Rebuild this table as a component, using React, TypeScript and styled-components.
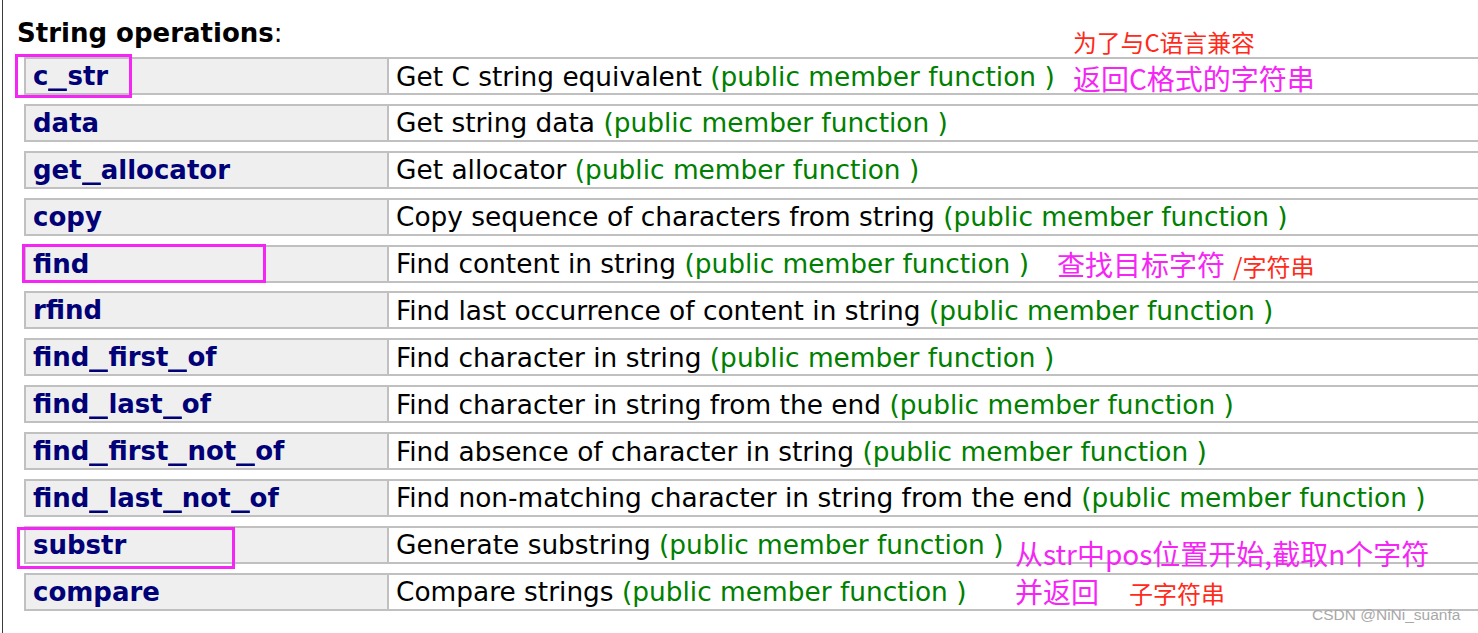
import React from "react";
import styled, { createGlobalStyle } from "styled-components";

const GlobalStyle = createGlobalStyle`
  html, body { margin: 0; padding: 0; background: #ffffff; overflow: hidden; }
  #root { width: 1478px; height: 633px; position: relative; overflow: hidden; }
`;

const Frame = styled.div`
  margin-left: 2px;
  height: 633px;
  border-left: 1px solid #3a3a3a;
  padding-left: 14px;
  box-sizing: border-box;
  font-family: "DejaVu Sans", Verdana, sans-serif;
  overflow: hidden;
`;

const Title = styled.h3`
  margin: 0;
  padding-top: 17px;
  height: 57px;
  box-sizing: border-box;
  font-size: 26px;
  line-height: 32px;
  font-weight: normal;
  color: #000;
  b { font-weight: bold; }
`;

const Table = styled.div`
  margin-left: 7px;
  display: flex;
  flex-direction: column;
  gap: 8.88px;
`;

const Row = styled.div`
  display: flex;
  width: 1600px;
  height: 38px;
  box-sizing: border-box;
  border-top: 2px solid #c0c0c0;
  border-bottom: 2px solid #c0c0c0;
  font-size: 26.4px;
`;

const NameCell = styled.div`
  width: 365px;
  flex: none;
  box-sizing: border-box;
  background: #efefef;
  border-left: 2px solid #c0c0c0;
  border-right: 2px solid #c0c0c0;
  padding-left: 7px;
  display: flex;
  align-items: center;
  font-size: 26px;
  font-weight: bold;
  color: #000077;
  white-space: pre;
`;

const Under = styled.span`
  display: inline-block;
  margin: 0 3px;
  transform: scaleX(1.45);
`;

const DescCell = styled.div`
  flex: 1;
  padding-left: 7px;
  display: flex;
  align-items: center;
  white-space: pre;
  color: #000;
`;

const Kind = styled.span`
  color: #008000;
`;

const Mark = styled.div<{ $x: number; $y: number; $w: number; $h: number }>`
  position: absolute;
  left: ${(p) => p.$x}px;
  top: ${(p) => p.$y}px;
  width: ${(p) => p.$w}px;
  height: ${(p) => p.$h}px;
  border: 3px solid #f526f5;
  box-sizing: border-box;
  pointer-events: none;
`;

const NoteBlock = styled.div<{ $x: number; $y: number; $gap: number }>`
  position: absolute;
  left: ${(p) => p.$x}px;
  top: ${(p) => p.$y}px;
  display: flex;
  flex-direction: column;
  gap: ${(p) => p.$gap}px;
  font-family: "Noto Sans CJK SC", "Microsoft YaHei", sans-serif;
  line-height: 1;
  white-space: pre;
`;

const NoteLine = styled.div<{ $gap?: number }>`
  display: flex;
  align-items: flex-end;
  gap: ${(p) => p.$gap ?? 0}px;
`;

const Note = styled.span<{ $size: number; $red?: boolean }>`
  font-size: ${(p) => p.$size}px;
  color: ${(p) => (p.$red ? "#ff2a1a" : "#f526f5")};
`;

const Watermark = styled.div`
  position: absolute;
  left: 1312px;
  top: 606px;
  font-family: "Liberation Sans", Arial, sans-serif;
  font-size: 15.5px;
  color: #a8a8a8;
  white-space: pre;
`;

const rows: [string, string][] = [
  ["c_str", "Get C string equivalent"],
  ["data", "Get string data"],
  ["get_allocator", "Get allocator"],
  ["copy", "Copy sequence of characters from string"],
  ["find", "Find content in string"],
  ["rfind", "Find last occurrence of content in string"],
  ["find_first_of", "Find character in string"],
  ["find_last_of", "Find character in string from the end"],
  ["find_first_not_of", "Find absence of character in string"],
  ["find_last_not_of", "Find non-matching character in string from the end"],
  ["substr", "Generate substring"],
  ["compare", "Compare strings"],
];

function Name({ text }: { text: string }) {
  const parts = text.split("_");
  return (
    <NameCell>
      {parts.map((p, i) => (
        <React.Fragment key={i}>
          {i > 0 && <Under>_</Under>}
          {p}
        </React.Fragment>
      ))}
    </NameCell>
  );
}

export default function App() {
  return (
    <>
      <GlobalStyle />
      <Frame>
        <Title>
          <b>String operations</b>:
        </Title>
        <Table>
          {rows.map(([name, desc]) => (
            <Row key={name}>
              <Name text={name} />
              <DescCell>
                {desc + " "}
                <Kind>(public member function )</Kind>
              </DescCell>
            </Row>
          ))}
        </Table>
      </Frame>
      <Mark $x={15} $y={54} $w={117} $h={44} />
      <Mark $x={22} $y={244} $w={244} $h={39} />
      <Mark $x={17} $y={527} $w={218} $h={42} />
      <NoteBlock $x={1073} $y={30} $gap={10}>
        <Note $size={23.8} $red>为了与C语言兼容</Note>
        <Note $size={28}>返回C格式的字符串</Note>
      </NoteBlock>
      <NoteBlock $x={1057} $y={250} $gap={0}>
        <NoteLine $gap={8}>
          <Note $size={28}>查找目标字符</Note>
          <Note $size={24} $red>/字符串</Note>
        </NoteLine>
      </NoteBlock>
      <NoteBlock $x={1015} $y={539} $gap={10}>
        <Note $size={28}>从str中pos位置开始,截取n个字符</Note>
        <NoteLine $gap={30}>
          <Note $size={28}>并返回</Note>
          <Note $size={24} $red>子字符串</Note>
        </NoteLine>
      </NoteBlock>
      <Watermark>CSDN @NiNi_suanfa</Watermark>
    </>
  );
}
